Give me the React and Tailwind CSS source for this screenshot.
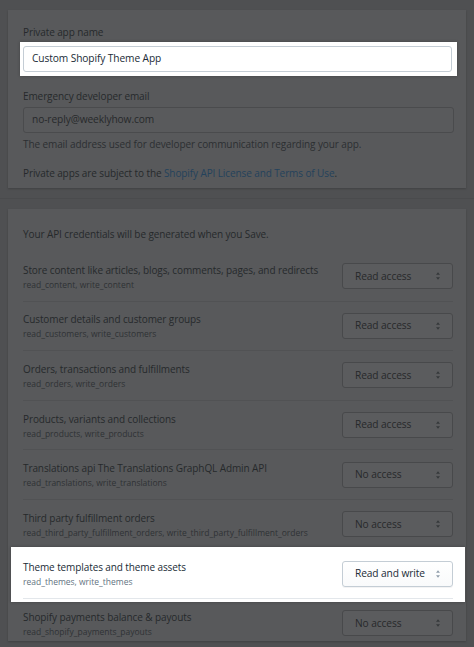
import React from "react";

const font = { fontFamily: '"Open Sans", "Noto Sans", sans-serif' };

function Arrows({ color }) {
  return (
    <svg width="6" height="10" viewBox="0 0 6 10" className="shrink-0">
      <path d="M3 1.2 L5 3.8 H1 Z" fill={color} />
      <path d="M3 8.8 L1 6.2 H5 Z" fill={color} />
    </svg>
  );
}

function Select({ value, light }) {
  if (light) {
    return (
      <div className="w-[111px] h-[26px] shrink-0 flex items-center justify-between pl-[12px] pr-[11px] rounded-[3px] border border-[#c4cdd5] bg-gradient-to-b from-white to-[#f9fafb] shadow-[0_1px_0_rgba(22,29,37,0.05)] text-[10.2px] tracking-[-0.1px] whitespace-nowrap text-[#212b36]">
        <span>{value}</span>
        <Arrows color="#919eab" />
      </div>
    );
  }
  return (
    <div className="w-[111px] h-[26px] shrink-0 flex items-center justify-between pl-[12px] pr-[11px] rounded-[3px] border border-[#48494b] bg-[#5b5c5e] text-[10.2px] tracking-[-0.1px] whitespace-nowrap text-[#27292b]">
      <span>{value}</span>
      <Arrows color="#35383b" />
    </div>
  );
}

function Row({ title, sub, value, highlight }) {
  if (highlight) {
    return (
      <div className="relative -mx-[12px] px-[12px] -mt-[3px] pt-[3px] -mb-[3px] pb-[3px] bg-white shadow-[0_0_3px_rgba(0,0,0,0.25)]">
        <div className="h-[49.6px] flex items-center justify-between border-b border-[#e3e7eb]">
          <div>
            <div className="text-[10px] tracking-[-0.1px] leading-[16px] text-[#212b36]">{title}</div>
            <div className="text-[8.5px] leading-[13px] text-[#637381]">{sub}</div>
          </div>
          <Select value={value} light />
        </div>
      </div>
    );
  }
  return (
    <div className="h-[49.6px] flex items-center justify-between border-b border-[#515254]">
      <div>
        <div className="text-[10px] tracking-[-0.1px] leading-[16px] text-[#26292b]">{title}</div>
        <div className="text-[8.5px] leading-[13px] text-[#2f3235]">{sub}</div>
      </div>
      <Select value={value} />
    </div>
  );
}

const rows = [
  ["Store content like articles, blogs, comments, pages, and redirects", "read_content, write_content", "Read access"],
  ["Customer details and customer groups", "read_customers, write_customers", "Read access"],
  ["Orders, transactions and fulfillments", "read_orders, write_orders", "Read access"],
  ["Products, variants and collections", "read_products, write_products", "Read access"],
  ["Translations api The Translations GraphQL Admin API", "read_translations, write_translations", "No access"],
  ["Third party fulfillment orders", "read_third_party_fulfillment_orders, write_third_party_fulfillment_orders", "No access"],
  ["Theme templates and theme assets", "read_themes, write_themes", "Read and write", true],
  ["Shopify payments balance & payouts", "read_shopify_payments_payouts", "No access"],
];

export default function App() {
  return (
    <div style={font} className="w-[474px] h-[647px] overflow-hidden bg-[#4f5052] pt-[10px] px-[8px]">
      {/* Card 1 */}
      <div className="h-[178px] bg-[#58595b] pl-[15px] pr-[12px] pt-[14px] shadow-[0_1px_2px_rgba(0,0,0,0.2)]">
        <div className="text-[10px] tracking-[-0.1px] leading-[16px] text-[#26292b]">Private app name</div>
        <div className="relative mt-[2px] -mx-[3px] -my-[4px] pl-[3px] pr-[5px] py-[4px] bg-white shadow-[0_0_3px_rgba(0,0,0,0.25)]">
          <div className="h-[26px] flex items-center pl-[8px] rounded-[3px] border border-[#c4cdd5] bg-white text-[10.2px] tracking-[-0.1px] text-[#212b36]">
            Custom Shopify Theme App
          </div>
        </div>
        <div className="mt-[16px] text-[10px] tracking-[-0.1px] leading-[16px] text-[#26292b]">Emergency developer email</div>
        <div className="mt-[3px] h-[26px] flex items-center pl-[8px] rounded-[3px] border border-[#4a4b4d] bg-[#595a5c] text-[10.2px] tracking-[-0.1px] text-[#27292b]">
          no-reply@weeklyhow.com
        </div>
        <div className="mt-[3px] text-[10px] tracking-[-0.1px] leading-[16px] text-[#2c2f32]">
          The email address used for developer communication regarding your app.
        </div>
        <div className="mt-[13px] text-[10px] tracking-[-0.1px] leading-[16px] text-[#26292b]">
          Private apps are subject to the <span className="text-[#24425c]">Shopify API License and Terms of Use</span>.
        </div>
      </div>

      <div className="mt-[10px] -mx-[8px] h-px bg-[#4a4b4d]" />

      {/* Card 2 */}
      <div className="mt-[10px] h-[432px] overflow-hidden bg-[#58595b] pl-[15px] pr-[13px] pt-[17px] shadow-[0_1px_2px_rgba(0,0,0,0.2)]">
        <div className="text-[10px] tracking-[-0.1px] leading-[16px] text-[#26292b]">Your API credentials will be generated when you Save.</div>
        <div className="mt-[10px]">
          {rows.map(([t, s, v, h]) => (
            <Row key={t} title={t} sub={s} value={v} highlight={h} />
          ))}
        </div>
      </div>
    </div>
  );
}
